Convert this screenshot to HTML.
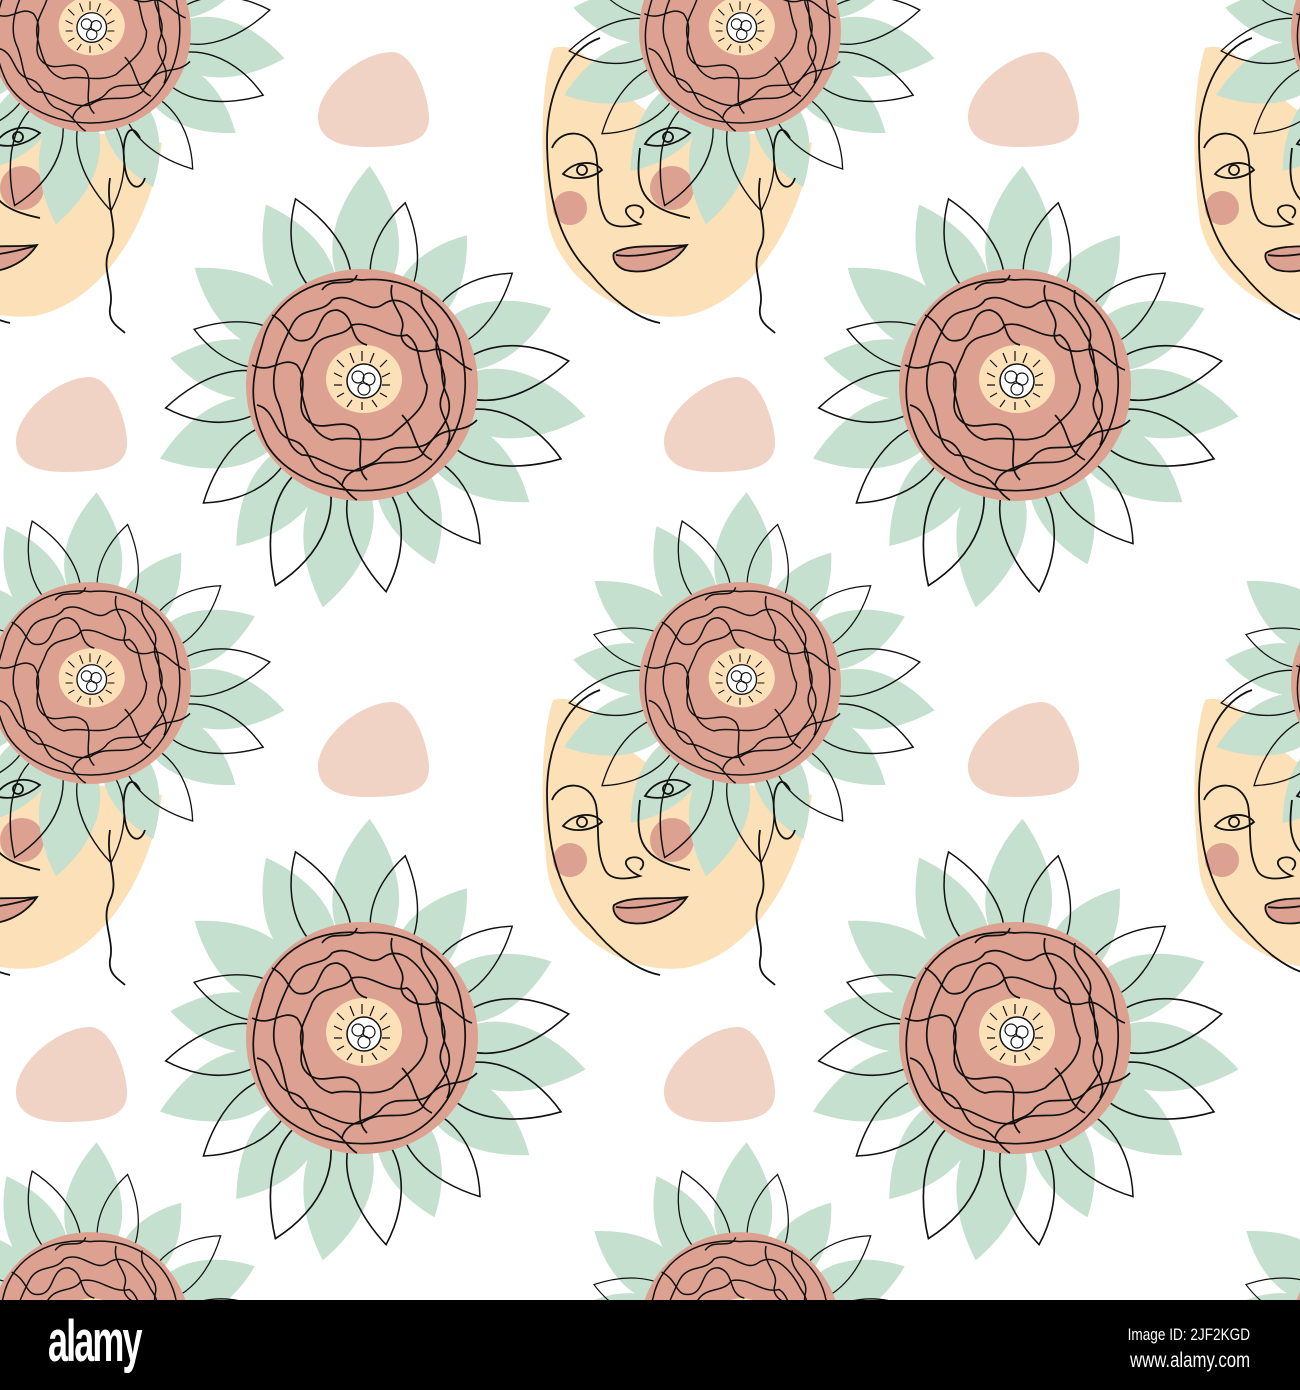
<!DOCTYPE html>
<html><head><meta charset="utf-8"><style>
html,body{margin:0;padding:0;background:#fff;width:1300px;height:1390px;overflow:hidden;font-family:"Liberation Sans",sans-serif}
.wrap{position:relative;width:1300px;height:1390px;overflow:hidden}
svg{display:block;position:absolute;left:0;top:0}
.bar{position:absolute;left:0;top:1300px;width:1300px;height:90px;background:#000;overflow:hidden}
.logo{position:absolute;left:48px;top:12px;color:#fff;font-weight:bold;font-size:58px;letter-spacing:-3px;transform:scaleX(0.62);transform-origin:left top;line-height:60px}
.id{position:absolute;right:50px;top:22px;color:#fff;font-size:17px;transform:scaleX(0.8);transform-origin:right top;text-align:right;line-height:26px}
.id b{font-size:21px;font-weight:normal}
</style></head><body><div class="wrap">
<svg width="1300" height="1300" viewBox="0 0 1300 1300" xmlns="http://www.w3.org/2000/svg">
<defs>
<path id="lf" d="M70,0 C105,-48 165,-42 215,0 C165,38 108,46 70,0Z"/>
<path id="lo" d="M80,6 C112,-36 165,-34 208,-6 C165,28 112,40 80,6Z"/>
<g id="fl">
 <g fill="#c5e0cf">
  <use href="#lf" transform="rotate(-118) scale(0.95)"/><use href="#lf" transform="rotate(-88) scale(1.02)"/>
  <use href="#lf" transform="rotate(-55) scale(0.85)"/><use href="#lf" transform="rotate(-22) scale(0.95)"/>
  <use href="#lf" transform="rotate(8) scale(1.05)"/><use href="#lf" transform="rotate(35) scale(0.95)"/>
  <use href="#lf" transform="rotate(68) scale(0.9)"/><use href="#lf" transform="rotate(100) scale(1.05)"/>
  <use href="#lf" transform="rotate(128) scale(0.95)"/><use href="#lf" transform="rotate(160) scale(1.0)"/>
  <use href="#lf" transform="rotate(188) scale(0.9)"/><use href="#lf" transform="rotate(215) scale(0.95)"/>
 </g>
 <g fill="none" stroke="#111" stroke-width="1.6">
  <use href="#lo" transform="rotate(-108) scale(0.95)"/><use href="#lo" transform="rotate(-75) scale(0.9)"/>
  <use href="#lo" transform="rotate(-35) scale(0.9)"/><use href="#lo" transform="rotate(-5) scale(1.0)"/>
  <use href="#lo" transform="rotate(22) scale(1.02)"/><use href="#lo" transform="rotate(55) scale(0.95)"/>
  <use href="#lo" transform="rotate(85) scale(1.0)"/><use href="#lo" transform="rotate(115) scale(1.05)"/>
  <use href="#lo" transform="rotate(145) scale(0.95)"/><use href="#lo" transform="rotate(175) scale(0.95)"/>
  <use href="#lo" transform="rotate(200) scale(0.85)"/>
 </g>
 <circle r="116" fill="#dca190"/>
 <ellipse cx="2" cy="-6" rx="38" ry="34" fill="#fbe0b8"/>
 <g fill="none" stroke="#111" stroke-width="1.7">
  <path d="M-100,-40 C-90,-90 -40,-110 0,-105 C50,-110 95,-80 100,-30 C112,20 90,80 40,100 C-10,115 -70,100 -95,60 C-115,20 -110,-10 -100,-40Z"/>
  <path d="M-70,-60 C-60,-80 -40,-70 -30,-85 C-10,-95 5,-70 20,-80 C40,-95 60,-70 70,-50 C85,-30 75,-10 85,10 C95,35 70,50 60,70 C40,85 20,70 0,85 C-25,90 -40,70 -60,70 C-80,60 -75,35 -85,15 C-95,-10 -80,-40 -70,-60Z"/>
  <path d="M-50,-35 C-40,-55 -20,-45 -10,-60 C10,-65 25,-45 45,-50 C60,-40 55,-20 65,0 C65,25 45,35 30,50 C10,60 -10,50 -30,55 C-50,50 -55,30 -60,10 C-65,-10 -55,-20 -50,-35Z"/>
  <path d="M-110,-20 C-90,-10 -80,-30 -65,-20 C-50,0 -70,20 -55,35 C-40,50 -20,30 -5,45 C5,60 -10,80 5,95"/>
  <path d="M30,-100 C25,-80 45,-70 40,-55 C35,-40 55,-30 70,-35 C85,-40 95,-20 110,-15"/>
  <path d="M-20,100 C-15,80 10,85 20,70 C35,55 55,70 70,55 C85,40 100,50 115,35"/>
  <path d="M-90,-70 C-70,-60 -75,-40 -55,-45 C-40,-50 -45,-75 -25,-75 C-5,-70 -15,-45 5,-40"/>
  <path d="M60,-95 C55,-70 80,-65 75,-45 C70,-25 90,-15 80,10 C72,30 95,40 85,60"/>
  <path d="M-105,20 C-85,25 -90,50 -70,55 C-50,60 -55,85 -35,90 C-20,95 -15,110 -5,115"/>
  <path d="M-40,-95 C-30,-110 -10,-95 -5,-110"/>
  <path d="M40,30 C55,45 50,65 70,75"/>
 </g>
 <circle cx="2" cy="-4" r="17" fill="#fff" stroke="#111" stroke-width="1.5"/>
 <g fill="none" stroke="#111" stroke-width="1.2">
  <circle cx="-4" cy="-8" r="6"/><circle cx="7" cy="-6" r="6"/><circle cx="2" cy="4" r="6"/>
  <path d="M-25,-25 L-18,-18 M-28,-12 L-20,-8 M-28,0 L-20,0 M-25,12 L-18,8 M-15,22 L-10,15 M0,25 L0,17 M15,22 L10,15 M25,12 L18,8 M28,0 L20,0 M28,-12 L20,-8 M25,-25 L18,-18 M12,-32 L8,-22 M-12,-32 L-8,-22 M0,-34 L0,-24"/>
 </g>
</g>
<g id="face">
 <path d="M553,700 C585,690 610,740 650,765 C700,790 760,780 812,795 C800,880 750,955 685,968 C620,975 560,930 548,875 C540,815 540,740 553,700Z" fill="#fbe0b8"/>
 <circle cx="570" cy="860" r="17" fill="#dca190"/>
 <circle cx="672" cy="840" r="22" fill="#dca190"/>
 <use href="#fl" transform="translate(740,683) scale(0.87)"/>
 <g fill="none" stroke="#111" stroke-width="1.8">
  <path d="M600,690 C570,700 548,740 547,790 C547,840 555,890 590,925 C610,950 635,970 660,975"/>
  <path d="M552,800 C560,780 590,780 596,805 C600,830 595,850 605,870 C610,880 625,880 640,876 C630,872 620,862 630,858 C640,855 648,862 640,870"/>
  <path d="M563,826 C575,812 595,812 602,822 C590,832 572,832 563,826Z"/>
  <circle cx="582" cy="822" r="5"/>
  <path d="M645,796 C655,780 675,775 690,785 C675,798 658,800 645,796Z"/>
  <circle cx="668" cy="789" r="5"/>
  <path d="M640,800 C635,840 640,860 690,870"/>
  <path d="M614,905 C630,895 660,900 687,897 C675,915 650,928 625,922 C615,918 612,910 614,905Z" fill="#dca190"/>
  <path d="M616,907 C635,910 660,905 685,898"/>
  <path d="M790,790 C780,770 770,790 775,820 C778,840 790,845 795,830"/>
  <path d="M760,830 C755,860 770,880 760,900 C750,920 765,940 760,960 C758,975 770,980 775,985"/>
 </g>
</g>
<path id="bl" d="M20,-48 C40,-48 55,-10 57,15 C58,40 40,47 -5,47 C-40,47 -55,35 -54,15 C-52,-15 -10,-48 20,-48Z" fill="#f1d3c5"/>
</defs>
<use href="#bl" x="372" y="100"/><use href="#bl" x="1022" y="100"/>
<use href="#bl" x="70" y="425"/><use href="#bl" x="718" y="425"/>
<use href="#bl" x="372" y="750"/><use href="#bl" x="1022" y="750"/>
<use href="#bl" x="70" y="1075"/><use href="#bl" x="718" y="1075"/>
<use href="#fl" x="362" y="385"/><use href="#fl" x="1015" y="385"/>
<use href="#fl" x="362" y="1038"/><use href="#fl" x="1015" y="1038"/>
<use href="#face" x="0" y="-652"/><use href="#face" x="-650" y="-652"/><use href="#face" x="652" y="-652"/>
<use href="#face" x="0" y="0"/><use href="#face" x="-650" y="0"/><use href="#face" x="652" y="0"/>
<use href="#face" x="0" y="650"/><use href="#face" x="-650" y="650"/><use href="#face" x="652" y="650"/>
</svg>
<div class="bar"><div class="logo">alamy</div><div class="id">Image ID: 2JF2KGD<br><b>www.alamy.com</b></div></div>
</div></body></html>
